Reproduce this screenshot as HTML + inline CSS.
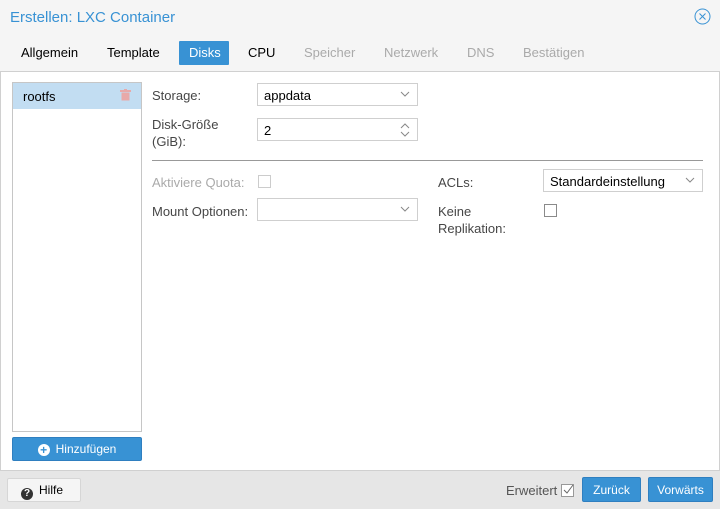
<!DOCTYPE html>
<html><head><meta charset="utf-8"><style>
*{box-sizing:border-box;margin:0;padding:0}
body{width:720px;height:509px;overflow:hidden;background:#f5f5f5;font-family:"Liberation Sans",Arial,sans-serif;font-size:13px;color:#000;position:relative}
.a{position:absolute}
.title{left:10px;top:9px;font-size:15px;color:#3892d4}
.tab{top:45px;font-size:13px;line-height:16px}
.dis{color:#aaa}
.panel{left:0;top:71px;width:720px;height:400px;background:#fff;border:1px solid #d0d0d0}
.lbl{color:#464646}
.fld{border:1px solid #cfcfcf;background:#fff;height:23px;padding:4px 6px;font-size:13px}
.chev{position:absolute;right:6px;top:4px}
.btn{background:#3892d4;color:#fff;border:1px solid #2f7fc0;border-radius:2px;text-align:center;font-size:12px;line-height:22px}
.cb{border:1px solid #8a8a8a;width:13px;height:13px;background:#fff}
</style></head><body>
<div class="a title">Erstellen: LXC Container</div>
<svg class="a" style="left:694px;top:8px" width="17" height="17" viewBox="0 0 17 17"><circle cx="8.5" cy="8.5" r="7.5" fill="none" stroke="#3892d4" stroke-width="1"/><path d="M5.5 5.5l6 6M11.5 5.5l-6 6" stroke="#3892d4" stroke-width="1"/></svg>
<div class="a tab" style="left:21px">Allgemein</div>
<div class="a tab" style="left:107px">Template</div>
<div class="a" style="left:179px;top:41px;width:50px;height:24px;background:#3892d4;border-radius:1px"></div>
<div class="a tab" style="left:189px;color:#fff">Disks</div>
<div class="a tab" style="left:248px">CPU</div>
<div class="a tab dis" style="left:304px">Speicher</div>
<div class="a tab dis" style="left:384px">Netzwerk</div>
<div class="a tab dis" style="left:467px">DNS</div>
<div class="a tab dis" style="left:523px">Bestätigen</div>
<div class="a panel"></div>
<div class="a" style="left:12px;top:82px;width:130px;height:350px;border:1px solid #c6c6c6;background:#fff"></div>
<div class="a" style="left:13px;top:83px;width:128px;height:26px;background:#c2ddf2"></div>
<div class="a" style="left:23px;top:89px">rootfs</div>
<svg class="a" style="left:120px;top:89px" width="11" height="12" viewBox="0 0 11 12"><rect x="0" y="1" width="11" height="2" fill="#e8a9a9"/><rect x="4" y="0" width="3" height="1" fill="#e8a9a9"/><rect x="1.5" y="3.5" width="8" height="8" fill="#e8a9a9"/></svg>
<div class="a btn" style="left:12px;top:437px;width:130px;height:24px;line-height:23px"><span style="display:inline-block;width:12px;height:12px;border-radius:6px;background:#fff;color:#3892d4;font-weight:bold;line-height:12px;font-size:12px;vertical-align:-1px;margin-right:6px">+</span>Hinzufügen</div>
<div class="a lbl" style="left:152px;top:88px">Storage:</div>
<div class="a fld" style="left:257px;top:83px;width:161px">appdata<svg class="chev" width="12" height="12"><path d="M2 4l4 4 4-4" fill="none" stroke="#888"/></svg></div>
<div class="a lbl" style="left:152px;top:116px;line-height:17px">Disk-Größe<br>(GiB):</div>
<div class="a fld" style="left:257px;top:118px;width:161px">2<svg class="chev" style="top:3px" width="12" height="16"><path d="M2 6l4-4 4 4M2 10l4 4 4-4" fill="none" stroke="#888"/></svg></div>
<div class="a" style="left:152px;top:160px;width:551px;height:1px;background:#999"></div>
<div class="a" style="left:152px;top:175px;color:#aaa">Aktiviere Quota:</div>
<div class="a cb" style="left:258px;top:175px;border-color:#ccc"></div>
<div class="a lbl" style="left:152px;top:204px">Mount Optionen:</div>
<div class="a fld" style="left:257px;top:198px;width:161px"><svg class="chev" width="12" height="12"><path d="M2 4l4 4 4-4" fill="none" stroke="#888"/></svg></div>
<div class="a lbl" style="left:438px;top:175px">ACLs:</div>
<div class="a fld" style="left:543px;top:169px;width:160px;color:#000">Standardeinstellung<svg class="chev" width="12" height="12"><path d="M2 4l4 4 4-4" fill="none" stroke="#888"/></svg></div>
<div class="a lbl" style="left:438px;top:203px;line-height:17px">Keine<br>Replikation:</div>
<div class="a cb" style="left:544px;top:204px"></div>
<div class="a" style="left:0;top:471px;width:720px;height:38px;background:#e6e6e6"></div>
<div class="a" style="left:7px;top:478px;width:74px;height:24px;background:#f5f5f5;border:1px solid #d6d6d6;border-radius:2px;font-size:12px;line-height:22px;padding-left:13px"><span style="display:inline-block;width:12px;height:12px;border-radius:6px;background:#333;color:#fff;font-size:10px;font-weight:bold;text-align:center;line-height:12px;margin-right:6px;vertical-align:-2px">?</span>Hilfe</div>
<div class="a" style="left:506px;top:483px;color:#555">Erweitert</div>
<div class="a cb" style="left:561px;top:484px;border-color:#999"></div>
<svg class="a" style="left:561px;top:482px" width="14" height="14"><path d="M3 8l3 3 6-8" fill="none" stroke="#666"/></svg>
<div class="a btn" style="left:582px;top:477px;width:59px;height:25px;line-height:24px">Zurück</div>
<div class="a btn" style="left:648px;top:477px;width:65px;height:25px;line-height:24px">Vorwärts</div>
</body></html>
